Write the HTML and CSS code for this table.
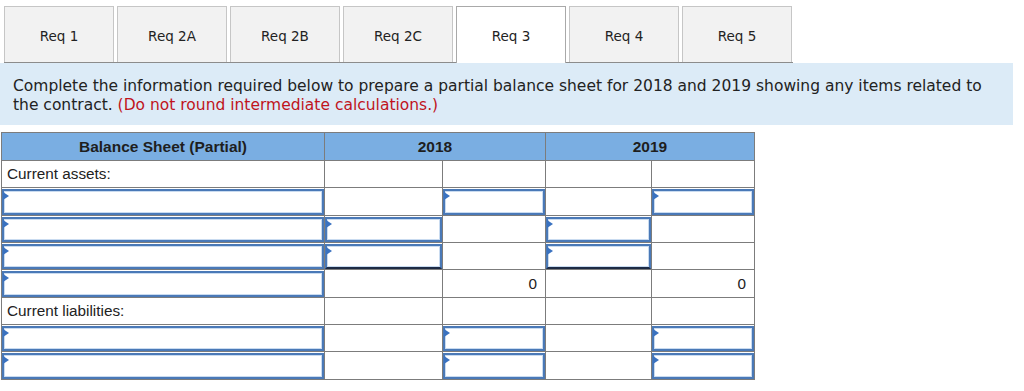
FILE: index.html
```html
<!DOCTYPE html>
<html>
<head>
<meta charset="utf-8">
<link rel="stylesheet" href="styles.css">
</head>
<body>
<div class="tabs">
  <div class="tab">Req 1</div>
  <div class="tab">Req 2A</div>
  <div class="tab">Req 2B</div>
  <div class="tab">Req 2C</div>
  <div class="tab active">Req 3</div>
  <div class="tab">Req 4</div>
  <div class="tab">Req 5</div>
</div>
<div class="panel">
  <div class="line">Complete the information required below to prepare a partial balance sheet for 2018 and 2019 showing any items related to</div>
  <div class="line">the contract. <span class="note">(Do not round intermediate calculations.)</span></div>
</div>
<div class="sheet">
  <div class="c head">Balance Sheet (Partial)</div>
  <div class="c head span2">2018</div>
  <div class="c head span2">2019</div>

  <div class="c label">Current assets:</div>
  <div class="c"></div><div class="c"></div><div class="c"></div><div class="c"></div>

  <div class="c"><div class="inp"></div></div>
  <div class="c"></div>
  <div class="c"><div class="inp"></div></div>
  <div class="c"></div>
  <div class="c"><div class="inp"></div></div>

  <div class="c"><div class="inp"></div></div>
  <div class="c"><div class="inp"></div></div>
  <div class="c"></div>
  <div class="c"><div class="inp"></div></div>
  <div class="c"></div>

  <div class="c"><div class="inp"></div></div>
  <div class="c"><div class="inp dark"></div></div>
  <div class="c"></div>
  <div class="c"><div class="inp dark"></div></div>
  <div class="c"></div>

  <div class="c"><div class="inp"></div></div>
  <div class="c"></div>
  <div class="c num">0</div>
  <div class="c"></div>
  <div class="c num">0</div>

  <div class="c label">Current liabilities:</div>
  <div class="c"></div><div class="c"></div><div class="c"></div><div class="c"></div>

  <div class="c"><div class="inp"></div></div>
  <div class="c"></div>
  <div class="c"><div class="inp"></div></div>
  <div class="c"></div>
  <div class="c"><div class="inp"></div></div>

  <div class="c"><div class="inp"></div></div>
  <div class="c"></div>
  <div class="c"><div class="inp"></div></div>
  <div class="c"></div>
  <div class="c"><div class="inp"></div></div>
</div>
</body>
</html>
```
FILE: styles.css
```css
* { box-sizing: border-box; }
body {
  margin: 0;
  background: #fff;
  font-family: "DejaVu Sans", Verdana, sans-serif;
  color: #222;
}
.tabs {
  display: flex;
  gap: 3px;
  width: 789px;
  margin: 6px 0 0 4px;
  border-bottom: 1px solid #8c8c8c;
}
.tab {
  width: 110px;
  height: 56px;
  background: #f2f2f2;
  border: 1px solid #c6c6c6;
  border-bottom: none;
  display: flex;
  align-items: center;
  justify-content: center;
  font-size: 13.5px;
  padding-top: 2px;
}
.tab.active {
  background: #fff;
  border-color: #a9a9a9;
  height: 57px;
  margin-bottom: -1px;
}
.panel {
  width: 1013px;
  height: 62px;
  background: #dcebf7;
  padding: 14px 0 0 13px;
  font-size: 15.5px;
  line-height: 19px;
}
.line { white-space: nowrap; }
.note { color: #c0141c; }
.sheet {
  margin: 7px 0 0 1px;
  display: grid;
  grid-template-columns: 323px 118px 103px 106px 103px;
  grid-template-rows: 28px 27px 28px 27px 27px 28px 27px 27px 28px;
  width: 754px;
  border-left: 1px solid #7c7c7c;
  border-top: 1px solid #7c7c7c;
  font-family: "Liberation Sans", Arial, sans-serif;
}
.c {
  border-right: 1px solid #7c7c7c;
  border-bottom: 1px solid #7c7c7c;
  position: relative;
  background: #fff;
}
.head {
  background: #7aaee2;
  font-weight: bold;
  font-size: 15.5px;
  display: flex;
  align-items: center;
  justify-content: center;
  color: #1e1e1e;
}
.span2 { grid-column: span 2; }
.label {
  font-size: 15.3px;
  display: flex;
  align-items: center;
  padding-left: 5px;
}
.num {
  font-size: 15.3px;
  display: flex;
  align-items: center;
  justify-content: flex-end;
  padding-right: 8px;
}
.inp {
  position: absolute;
  inset: 1px 0 0 0;
  border: 2px solid #4a79b7;
  box-shadow: inset 0 0 0 1px #c9dbf0;
  background: #fff;
}
.inp.dark { border-bottom-color: #1d2b44; }
.inp::before {
  content: "";
  position: absolute;
  left: -1px;
  top: 1px;
  border-left: 6px solid #3a72c0;
  border-top: 4px solid transparent;
  border-bottom: 4px solid transparent;
}
```
